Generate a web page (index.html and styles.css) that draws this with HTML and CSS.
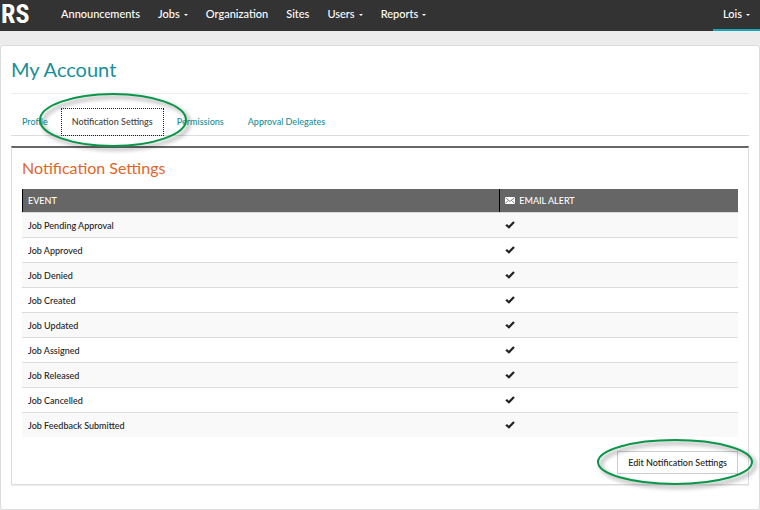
FILE: index.html
```html
<!DOCTYPE html>
<html lang="en">
<head>
  <meta charset="UTF-8">
  <meta name="viewport" content="width=device-width, initial-scale=1.0">
  <title>My Account</title>
  <link rel="stylesheet" href="styles.css">
</head>
<body>
  <svg width="0" height="0" class="defs" aria-hidden="true">
    <symbol id="check" viewBox="0 0 10 8">
      <path d="M0.3 4.6 L2 3.1 L3.8 4.7 L8.2 0.3 L9.8 1.7 L4 7.8 Z" fill="#222"/>
    </symbol>
  </svg>

  <header class="navbar">
    <a class="logo" href="#">RS</a>
    <nav class="menu">
      <a href="#">Announcements</a>
      <a href="#" class="dropdown">Jobs</a>
      <a href="#">Organization</a>
      <a href="#">Sites</a>
      <a href="#" class="dropdown">Users</a>
      <a href="#" class="dropdown">Reports</a>
    </nav>
    <nav class="menu user">
      <a href="#" class="dropdown current">Lois</a>
    </nav>
  </header>

  <main class="page">
    <h1>My Account</h1>

    <nav class="tabs">
      <a href="#">Profile</a>
      <a href="#" class="active">Notification Settings
        <svg class="ring ring-tab" viewBox="0 0 160 66" aria-hidden="true">
          <ellipse cx="80" cy="30" rx="73" ry="26"/>
        </svg>
      </a>
      <a href="#">Permissions</a>
      <a href="#">Approval Delegates</a>
    </nav>

    <section class="panel">
      <h2>Notification Settings</h2>
      <table>
        <thead>
          <tr>
            <th class="event">Event</th>
            <th>
              <svg class="mail" viewBox="0 0 10 7" aria-hidden="true">
                <rect width="10" height="7" fill="#fff"/>
                <path d="M0.5 0.8 L5 4.4 L9.5 0.8 M0.5 6.4 L3.4 3.4 M9.5 6.4 L6.6 3.4" fill="none" stroke="#666" stroke-width="0.8"/>
              </svg>Email Alert
            </th>
          </tr>
        </thead>
        <tbody>
          <tr><td>Job Pending Approval</td><td><svg class="check"><use href="#check"/></svg></td></tr>
          <tr><td>Job Approved</td><td><svg class="check"><use href="#check"/></svg></td></tr>
          <tr><td>Job Denied</td><td><svg class="check"><use href="#check"/></svg></td></tr>
          <tr><td>Job Created</td><td><svg class="check"><use href="#check"/></svg></td></tr>
          <tr><td>Job Updated</td><td><svg class="check"><use href="#check"/></svg></td></tr>
          <tr><td>Job Assigned</td><td><svg class="check"><use href="#check"/></svg></td></tr>
          <tr><td>Job Released</td><td><svg class="check"><use href="#check"/></svg></td></tr>
          <tr><td>Job Cancelled</td><td><svg class="check"><use href="#check"/></svg></td></tr>
          <tr><td>Job Feedback Submitted</td><td><svg class="check"><use href="#check"/></svg></td></tr>
        </tbody>
      </table>
      <div class="actions">
        <button type="button">Edit Notification Settings</button>
        <svg class="ring ring-edit" viewBox="0 0 168 60" aria-hidden="true">
          <ellipse cx="82" cy="27" rx="77" ry="22"/>
        </svg>
      </div>
    </section>
  </main>
</body>
</html>
```

FILE: styles.css
```css
* {
  box-sizing: border-box;
}
body {
  margin: 0;
  background: #ececec;
  color: #222;
  font-family: Lato, "Liberation Sans", sans-serif;
  font-size: 9px;
  font-weight: 500;
}
a {
  text-decoration: none;
}
.defs {
  position: absolute;
}

/* top bar */
.navbar {
  display: flex;
  height: 31px;
  background: #333;
}
.logo {
  width: 52px;
  padding-left: 1px;
  color: #fff;
  font-family: "Liberation Sans Narrow", "Roboto Condensed", "Liberation Sans", sans-serif;
  font-size: 26px;
  font-weight: bold;
  line-height: 29px;
}
.menu {
  display: flex;
}
.menu a {
  padding: 0 9px;
  color: #fff;
  font-size: 11px;
  line-height: 27px;
}
.user {
  margin-left: auto;
}
.dropdown::after {
  content: "";
  display: inline-block;
  margin-left: 4px;
  border: 2px solid transparent;
  border-top-color: #fff;
  border-bottom: 0;
  vertical-align: 2px;
}
.menu .current {
  padding: 0 10px;
  border-bottom: 2px solid #15a9b5;
}

/* page card */
.page {
  min-height: calc(100vh - 46px);
  margin-top: 14px;
  padding: 0 10px 24px;
  background: #fff;
  border: 1px solid #dcdcdc;
  border-radius: 3px;
}
h1 {
  margin: 0;
  padding: 11px 0 12px;
  border-bottom: 1px solid #ececec;
  color: #178f98;
  font-size: 20px;
  font-weight: normal;
  line-height: 24px;
}

.tabs {
  display: flex;
  gap: 2px;
  padding-top: 14px;
  border-bottom: 1px solid #dcdcdc;
}
.tabs a {
  padding: 0 10px;
  border: 1px solid transparent;
  border-bottom: 0;
  color: #178f98;
  line-height: 26px;
}
.tabs .active {
  position: relative;
  margin-bottom: -1px;
  border: 1px dotted #222;
  color: #444;
}

.panel {
  margin-top: 10px;
  padding: 10px;
  border: 1px solid #dcdcdc;
  border-top: 2px solid #666;
  box-shadow: 0 1px 0 #eee;
}
h2 {
  margin: 0 0 11px;
  color: #e0662a;
  font-size: 16px;
  font-weight: normal;
  line-height: 20px;
}

table {
  width: 100%;
  border-collapse: separate;
  border-spacing: 0;
}
th, td {
  padding: 0 5px;
  text-align: left;
}
th {
  height: 23px;
  background: #666;
  border-left: 1px solid #000;
  color: #fff;
  font-weight: 500;
  text-transform: uppercase;
}
.event {
  width: calc(200% / 3);
}
td {
  height: 25px;
  padding-left: 6px;
  border-top: 1px solid #dcdcdc;
}
tbody tr:nth-child(odd) {
  background: #f9f9f9;
}
.mail {
  width: 10px;
  height: 7px;
  margin-right: 4px;
}
.check {
  display: block;
  width: 10px;
  height: 8px;
}

.actions {
  position: relative;
  display: flex;
  justify-content: flex-end;
  margin-top: 14px;
}
button {
  height: 23px;
  padding: 0 10px;
  background: #fff;
  border: 1px solid #ccc;
  color: #222;
  font: inherit;
}

/* green highlight ovals */
.ring {
  position: absolute;
  z-index: 1;
  overflow: visible;
  fill: none;
  stroke: #0a9648;
  stroke-width: 2;
  filter: drop-shadow(3px 3px 2px rgba(0, 0, 0, 0.45));
  pointer-events: none;
}
.ring-tab {
  top: -19px;
  left: -29px;
  width: 160px;
  height: 66px;
}
.ring-edit {
  top: -16px;
  right: -23px;
  width: 168px;
  height: 60px;
}
```
